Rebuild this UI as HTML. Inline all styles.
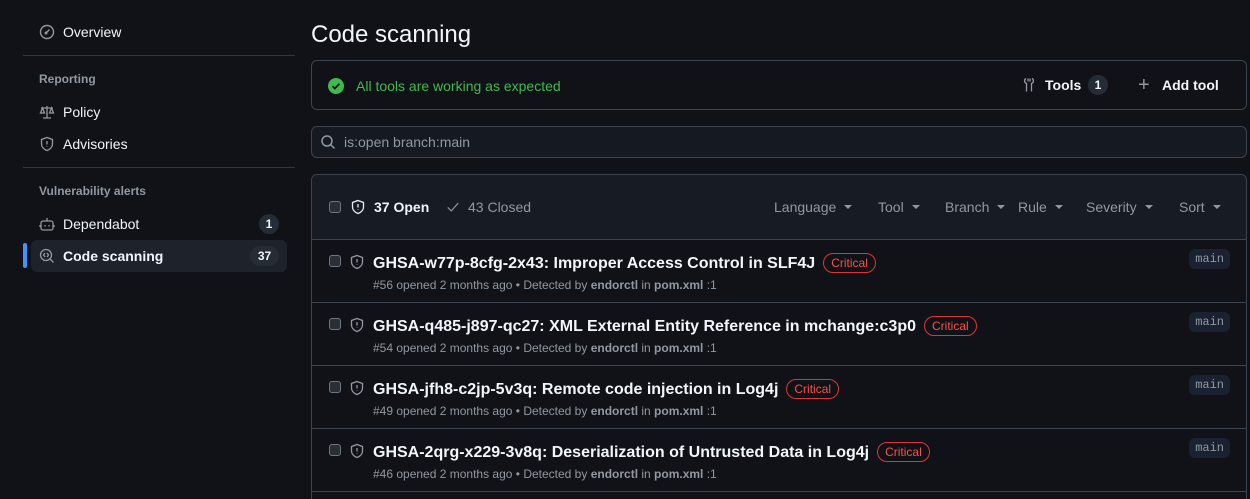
<!DOCTYPE html>
<html style="width:1250px;height:499px;overflow:hidden"><head><style>
*{box-sizing:border-box;margin:0;padding:0}
body{width:1250px;height:499px;overflow:hidden;background:#111217;font-family:"Liberation Sans",sans-serif;color:#e6edf3;font-size:14px;position:relative}
.a{position:absolute}
.side{color:#f0f6fc;font-size:14px}
.sec{color:#9198a1;font-size:12px;font-weight:bold}
.hr{position:absolute;height:1px;background:#30363d}
svg{position:absolute}
.cnt{position:absolute;background:#262c36;border-radius:10px;height:20px;font-size:12px;font-weight:bold;text-align:center;line-height:20px;color:#f0f6fc}
.box{position:absolute;border:1px solid #3d444d;border-radius:6px}
.row{position:absolute;left:312px;width:934px;height:63px;border-top:1px solid #3d444d}
.cb{position:absolute;left:17px;width:12px;height:12px;border:1px solid #6e7681;border-radius:3px;background:#2a2f36}
.ttl{position:absolute;left:61px;top:13px;font-size:16px;font-weight:bold;color:#f0f6fc;white-space:nowrap}
.crit{display:inline-block;border:1px solid #da3633;color:#f85149;border-radius:12px;font-size:12px;font-weight:normal;padding:2px 7px;margin-left:8px;vertical-align:1px}
.meta{position:absolute;left:61px;top:38px;font-size:12px;color:#9198a1;white-space:nowrap}
.meta b{color:#9198a1}
.br{position:absolute;right:16px;top:9px;background:#1a2130;color:#9198a1;font-family:"Liberation Mono",monospace;font-size:12px;padding:3px 6px;border-radius:6px}
.f{position:absolute;top:199px;color:#9198a1;font-size:14px}
.f:after{content:"";display:inline-block;border:4px solid transparent;border-top-color:#9198a1;margin-left:8px;vertical-align:-1px}
</style></head><body>
<svg style="left:39px;top:24px" width="16" height="16" viewBox="0 0 16 16" fill="none" stroke="#9198a1" stroke-width="1.4"><circle cx="8" cy="8" r="6.5"/><path d="M7 9l3.5-3.5"/><circle cx="7" cy="9" r="0.8" fill="#9198a1"/></svg>
<div class="a side" style="left:63px;top:24px">Overview</div>
<div class="hr" style="left:23px;top:55px;width:272px"></div>
<div class="a sec" style="left:39px;top:72px">Reporting</div>
<svg style="left:39px;top:104px" width="16" height="16" viewBox="0 0 16 16" fill="none" stroke="#9198a1" stroke-width="1.3"><path d="M8 2v12M4 14h8M2 4h12M3.5 4L1.5 9h4zM12.5 4l-2 5h4z"/></svg>
<div class="a side" style="left:63px;top:104px">Policy</div>
<svg style="left:39px;top:136px" width="16" height="16" viewBox="0 0 16 16" fill="none" stroke="#9198a1" stroke-width="1.3"><path d="M8 1.5l5.5 2v4.5c0 3.5-3 5.5-5.5 6.5C5.5 13.5 2.5 11.5 2.5 8V3.5z"/><path d="M8 5v3.5M8 10.5v.5"/></svg>
<div class="a side" style="left:63px;top:136px">Advisories</div>
<div class="hr" style="left:23px;top:167px;width:272px"></div>
<div class="a sec" style="left:39px;top:184px">Vulnerability alerts</div>
<svg style="left:39px;top:216px" width="16" height="16" viewBox="0 0 16 16" fill="none" stroke="#9198a1" stroke-width="1.3"><rect x="2" y="5" width="12" height="9" rx="2"/><path d="M8 2v3M6 9v1.5M10 9v1.5M1 9v2M15 9v2"/></svg>
<div class="a side" style="left:63px;top:216px">Dependabot</div>
<div class="cnt" style="left:259px;top:214px;width:20px">1</div>
<div class="a" style="left:31px;top:240px;width:256px;height:32px;background:#1e232b;border-radius:6px"></div>
<div class="a" style="left:23px;top:243px;width:4px;height:25px;background:#4493f8;border-radius:2px"></div>
<svg style="left:39px;top:248px" width="16" height="16" viewBox="0 0 16 16" fill="none" stroke="#9198a1" stroke-width="1.3"><circle cx="7" cy="7" r="5.5"/><path d="M11 11l3.5 3.5M6 5L4.5 7 6 9M8 5l1.5 2L8 9"/></svg>
<div class="a side" style="left:63px;top:248px;font-weight:bold">Code scanning</div>
<div class="cnt" style="left:250px;top:246px;width:29px">37</div>

<div class="a" style="left:311px;top:21px;font-size:24px;color:#f0f6fc">Code scanning</div>
<div class="box" style="left:311px;top:60px;width:936px;height:50px"></div>
<svg style="left:328px;top:78px" width="16" height="16" viewBox="0 0 16 16"><circle cx="8" cy="8" r="8" fill="#3fb950"/><path d="M4.5 8.2l2.3 2.3 4.7-4.7" stroke="#111217" stroke-width="1.8" fill="none"/></svg>
<div class="a" style="left:356px;top:78px;color:#3fb950">All tools are working as expected</div>
<svg style="left:1021px;top:77px" width="16" height="16" viewBox="0 0 16 16" fill="none" stroke="#9198a1" stroke-width="1.3"><path d="M5 1.5C3 2.5 3 5.5 5.5 6.5V14.5M11 1.5c2 1 2 4-.5 5V14.5M7 1.5v3M9 1.5v3"/></svg>
<div class="a" style="left:1045px;top:77px;font-weight:bold;color:#f0f6fc">Tools</div>
<div class="cnt" style="left:1088px;top:75px;width:20px">1</div>
<div class="a" style="left:1138px;top:74px;color:#9198a1;font-size:20px">+</div>
<div class="a" style="left:1162px;top:77px;font-weight:bold;color:#f0f6fc">Add tool</div>

<div class="box" style="left:311px;top:126px;width:936px;height:32px;background:#151a22"></div>
<svg style="left:320px;top:134px" width="16" height="16" viewBox="0 0 16 16" fill="none" stroke="#9198a1" stroke-width="1.5"><circle cx="7" cy="7" r="5"/><path d="M10.5 10.5l4 4"/></svg>
<div class="a" style="left:344px;top:134px;color:#9198a1">is:open branch:main</div>

<div class="a" style="left:311px;top:174px;width:936px;height:325px;border:1px solid #3d444d;border-bottom:none;border-radius:6px 6px 0 0"></div>
<div class="a" style="left:312px;top:175px;width:934px;height:64px;background:#161b24;border-radius:6px 6px 0 0"></div>
<div class="cb" style="left:329px;top:201px"></div>
<svg style="left:350px;top:199px" width="16" height="16" viewBox="0 0 16 16" fill="none" stroke="#e6edf3" stroke-width="1.3"><path d="M8 1.5l5.5 2v4.5c0 3.5-3 5.5-5.5 6.5C5.5 13.5 2.5 11.5 2.5 8V3.5z"/><path d="M8 5v3.5M8 10.5v.5"/></svg>
<div class="a" style="left:374px;top:199px;font-weight:bold;color:#f0f6fc">37 Open</div>
<svg style="left:446px;top:200px" width="14" height="14" viewBox="0 0 16 16" fill="none" stroke="#9198a1" stroke-width="1.3"><path d="M2 8.5l4 4 8-9"/></svg>
<div class="a" style="left:468px;top:199px;color:#9198a1">43 Closed</div>
<div class="f" style="left:774px">Language</div>
<div class="f" style="left:878px">Tool</div>
<div class="f" style="left:945px">Branch</div>
<div class="f" style="left:1018px">Rule</div>
<div class="f" style="left:1086px">Severity</div>
<div class="f" style="left:1179px">Sort</div>

<div class="row" style="top:239px"><div class="cb" style="top:15px"></div>
<svg style="left:37px;top:14px" width="16" height="16" viewBox="0 0 16 16" fill="none" stroke="#9198a1" stroke-width="1.3"><path d="M8 1.5l5.5 2v4.5c0 3.5-3 5.5-5.5 6.5C5.5 13.5 2.5 11.5 2.5 8V3.5z"/><path d="M8 5v3.5M8 10.5v.5"/></svg>
<div class="ttl">GHSA-w77p-8cfg-2x43: Improper Access Control in SLF4J<span class="crit">Critical</span></div>
<div class="meta">#56 opened 2 months ago • Detected by <b>endorctl</b> in <b>pom.xml</b> :1</div><div class="br">main</div></div>
<div class="row" style="top:302px"><div class="cb" style="top:15px"></div>
<svg style="left:37px;top:14px" width="16" height="16" viewBox="0 0 16 16" fill="none" stroke="#9198a1" stroke-width="1.3"><path d="M8 1.5l5.5 2v4.5c0 3.5-3 5.5-5.5 6.5C5.5 13.5 2.5 11.5 2.5 8V3.5z"/><path d="M8 5v3.5M8 10.5v.5"/></svg>
<div class="ttl">GHSA-q485-j897-qc27: XML External Entity Reference in mchange:c3p0<span class="crit">Critical</span></div>
<div class="meta">#54 opened 2 months ago • Detected by <b>endorctl</b> in <b>pom.xml</b> :1</div><div class="br">main</div></div>
<div class="row" style="top:365px"><div class="cb" style="top:15px"></div>
<svg style="left:37px;top:14px" width="16" height="16" viewBox="0 0 16 16" fill="none" stroke="#9198a1" stroke-width="1.3"><path d="M8 1.5l5.5 2v4.5c0 3.5-3 5.5-5.5 6.5C5.5 13.5 2.5 11.5 2.5 8V3.5z"/><path d="M8 5v3.5M8 10.5v.5"/></svg>
<div class="ttl">GHSA-jfh8-c2jp-5v3q: Remote code injection in Log4j<span class="crit">Critical</span></div>
<div class="meta">#49 opened 2 months ago • Detected by <b>endorctl</b> in <b>pom.xml</b> :1</div><div class="br">main</div></div>
<div class="row" style="top:428px"><div class="cb" style="top:15px"></div>
<svg style="left:37px;top:14px" width="16" height="16" viewBox="0 0 16 16" fill="none" stroke="#9198a1" stroke-width="1.3"><path d="M8 1.5l5.5 2v4.5c0 3.5-3 5.5-5.5 6.5C5.5 13.5 2.5 11.5 2.5 8V3.5z"/><path d="M8 5v3.5M8 10.5v.5"/></svg>
<div class="ttl">GHSA-2qrg-x229-3v8q: Deserialization of Untrusted Data in Log4j<span class="crit">Critical</span></div>
<div class="meta">#46 opened 2 months ago • Detected by <b>endorctl</b> in <b>pom.xml</b> :1</div><div class="br">main</div></div>
<div class="row" style="top:491px;height:8px"></div>
</body></html>
